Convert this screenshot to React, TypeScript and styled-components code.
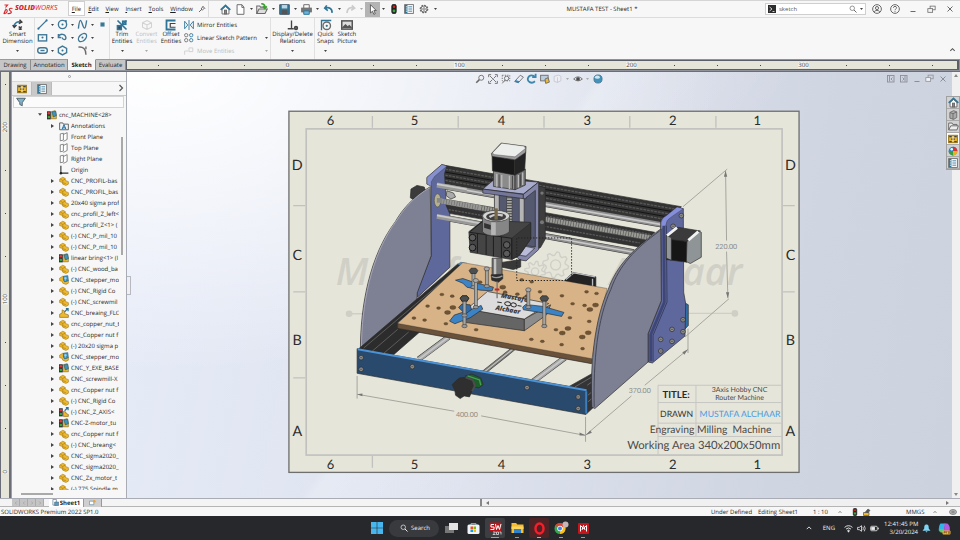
import React from "react";
import styled, { createGlobalStyle } from "styled-components";

const Global = createGlobalStyle`
  * { box-sizing: border-box; }
  html, body, #root { height: 100%; }
  body { margin: 0; overflow: hidden; background: #f7f7f7; text-rendering: geometricPrecision; }
  body, button, input { font-family: "Open Sans", "Noto Sans", sans-serif; font-size: 6px; color: #1f1f1f; }
  button { background: none; border: 0; padding: 0; margin: 0; line-height: inherit; text-rendering: inherit; }
  ul { list-style: none; margin: 0; padding: 0; }
`;

/* ---------- shell ---------- */
const Page = styled.div`
  display: flex;
  flex-direction: column;
  height: 100vh;
  line-height: 8px;
`;
const TitleBar = styled.header`
  display: flex;
  align-items: center;
  height: 18px;
  flex: none;
  background: #f7f7f7;
  border-top: 1px solid #d5d5d5;
  border-bottom: 1px solid #dcdcdc;
`;
const Logo = styled.div`
  display: flex;
  align-items: center;
  gap: 2px;
  width: 68px;
  padding-left: 3px;
  color: #d9262c;
  font-style: italic;
  font-size: 7px;
  b { font-weight: 800; }
`;
const Menu = styled.nav`
  display: flex;
  height: 100%;
  border-right: 1px solid #dcdcdc;
`;
const MenuItem = styled.button<{ $w: number; $boxed?: boolean }>`
  width: ${(p) => p.$w}px;
  height: 15px;
  border: ${(p) => (p.$boxed ? "1px solid #cfcfcf" : "0")};
  background: ${(p) => (p.$boxed ? "#fff" : "transparent")};
  &::first-letter { text-decoration: underline; }
`;
const Tool = styled.button<{ $w?: number; $on?: boolean }>`
  display: flex;
  align-items: center;
  justify-content: center;
  width: ${(p) => p.$w ?? 12}px;
  height: 15px;
  flex: none;
  background: ${(p) => (p.$on ? "#b4b4b4" : "transparent")};
`;
const QuickBar = styled.div`
  display: flex;
  align-items: center;
  padding-left: 8px;
`;
const DocTitle = styled.div`
  flex: 1;
  text-align: center;
  color: #222;
`;
const SearchBox = styled.label`
  display: flex;
  align-items: center;
  width: 101px;
  height: 12px;
  padding: 0 2px;
  gap: 3px;
  background: #fff;
  border: 1px solid #cfcfcf;
  input { flex: 1; min-width: 0; border: 0; padding: 0; outline: 0; background: none; color: #555; }
`;
const WindowTools = styled.div`
  display: flex;
  padding-left: 2px;
`;

/* ---------- ribbon ---------- */
const Ribbon = styled.div`
  display: flex;
  height: 41px;
  flex: none;
  background: #f7f7f7;
`;
const Group = styled.div<{ $w: number }>`
  display: flex;
  width: ${(p) => p.$w}px;
  flex: none;
  border-right: 1px solid #e0e0e0;
`;
const BigTool = styled.button<{ $w: number; $off?: boolean }>`
  display: flex;
  flex-direction: column;
  align-items: center;
  justify-content: flex-start;
  width: ${(p) => p.$w}px;
  flex: none;
  padding-top: 1px;
  line-height: 7px;
  color: ${(p) => (p.$off ? "#bdbdbd" : "#1f1f1f")};
  white-space: nowrap;
  span { height: 19px; }
`;
const SketchGrid = styled.div`
  display: grid;
  grid-template-columns: 12px 8px 12px 8px 12px 8px 12px;
  grid-auto-rows: 13px;
  align-items: center;
  justify-items: center;
  padding-left: 1px;
`;
const WideList = styled.div`
  display: flex;
  flex-direction: column;
  flex: 1;
`;
const WideTool = styled.button<{ $off?: boolean }>`
  display: flex;
  align-items: center;
  height: 13px;
  padding: 0 2px 0 1px;
  gap: 3px;
  color: ${(p) => (p.$off ? "#bdbdbd" : "#1f1f1f")};
  svg:not(:first-child) { margin-left: auto; }
`;
const RibbonEnd = styled.div`
  margin: auto 4px 4px auto;
`;

/* ---------- tabs and rulers ---------- */
const TabRow = styled.div`
  display: flex;
  height: 12px;
  flex: none;
  padding-bottom: 1px;
  background: #8f929b;
`;
const Tab = styled.button<{ $w: number; $on?: boolean }>`
  width: ${(p) => p.$w}px;
  flex: none;
  border-right: 1px solid #8d8d8d;
  border-top: 1px solid ${(p) => (p.$on ? "#f7f7f7" : "#9a9a9a")};
  background: ${(p) => (p.$on ? "#f7f7f7" : "#c6c6c6")};
  font-weight: ${(p) => (p.$on ? 700 : 400)};
`;
const RulerH = styled.div`
  display: flex;
  flex: 1;
  min-width: 0;
  margin-top: 1px;
  margin-right: 1px;
  padding-left: 10px;
  overflow: hidden;
  background: #e6e5da;
  border: 1px solid #5c5f68;
  border-right-width: 2px;
  color: #444;
`;
const RulerV = styled.div`
  display: flex;
  flex-direction: column;
  width: 11px;
  flex: none;
  overflow: hidden;
  background: #e6e5da;
  border: solid #6b6e78;
  border-width: 0 2px 0 1px;
  color: #444;
`;
const Mark = styled.span<{ $v?: boolean }>`
  display: flex;
  align-items: center;
  justify-content: center;
  flex: none;
  width: ${(p) => (p.$v ? "auto" : "43px")};
  height: ${(p) => (p.$v ? "43px" : "100%")};
  line-height: 6px;
  &:first-child { margin-top: ${(p) => (p.$v ? "-9px" : "0")}; }
  b { font-weight: 400; writing-mode: ${(p) => (p.$v ? "vertical-rl" : "horizontal-tb")}; transform: ${(p) => (p.$v ? "rotate(180deg)" : "none")}; background: #f4f4ee; }
  i { width: 1px; height: 1px; background: #444; }
`;

/* ---------- work area ---------- */
const Work = styled.main`
  display: flex;
  flex: 1;
  min-height: 0;
  border-top: 1px solid #6b6e78;
`;
const Side = styled.aside`
  display: flex;
  flex-direction: column;
  width: 116px;
  flex: none;
  background: #f7f7f7;
  border-left: 1px solid #9b9ea8;
  border-right: 1px solid #a9acb5;
`;
const Grip = styled.div`
  display: flex;
  align-items: center;
  justify-content: center;
  height: 10px;
  flex: none;
  border-bottom: 1px solid #d8d8d8;
  i { width: 3px; height: 3px; border: 1px solid #999; border-radius: 50%; }
`;
const SideTabs = styled.div`
  display: flex;
  align-items: center;
  height: 14px;
  flex: none;
  border-bottom: 1px solid #c9c9c9;
`;
const SideTab = styled.button<{ $on?: boolean }>`
  display: flex;
  align-items: center;
  justify-content: center;
  width: 20px;
  height: 13px;
  background: ${(p) => (p.$on ? "#c8c8c8" : "#ececec")};
  border-right: 1px solid #bbb;
`;
const Expand = styled.button`
  margin-left: auto;
  padding-right: 1px;
`;
const Filter = styled.label`
  display: flex;
  align-items: center;
  height: 12px;
  flex: none;
  margin: 0 2px 0 1px;
  padding: 0 2px;
  background: #fbfbfb;
  border: 1px solid #d4d4d4;
  input { width: 90px; border: 0; padding: 0; background: none; outline: 0; }
`;
const TreeWrap = styled.div`
  display: flex;
  flex: 1;
  min-height: 0;
  margin-top: 1px;
  overflow: hidden;
`;
const Tree = styled.ul`
  width: 107px;
  flex: none;
  overflow: hidden;
`;
const Row = styled.li<{ $root?: boolean }>`
  display: flex;
  align-items: center;
  height: 11px;
  padding-left: ${(p) => (p.$root ? 26 : 38)}px;
  white-space: nowrap;
  > svg { flex: none; }
  > svg + svg { margin: 0 2px 0 5px; }
`;
const Thumb = styled.div`
  width: 2px;
  height: 118px;
  margin: 28px 0 0 2px;
  background: #a9a9a9;
`;
const HThumb = styled.div`
  width: 32px;
  height: 2px;
  margin: 3px 0 3px 9px;
  flex: none;
  background: #a9a9a9;
`;
const Viewport = styled.section`
  position: relative;
  flex: 1;
  min-width: 0;
  background:
    linear-gradient(125deg, rgba(255,255,255,0) 42%, rgba(255,255,255,.2) 43%, rgba(255,255,255,0) 60%),
    radial-gradient(ellipse at 4% 0%, #ffffff 0%, rgba(255,255,255,0) 50%),
    linear-gradient(100deg, #e6ebf8 0%, #dde2ee 45%, #d0d5e2 80%, #cdd2df 100%);
`;
const Canvas = styled.svg`
  display: block;
  width: 100%;
  height: 100%;
`;
const HeadsUp = styled.div<{ $side?: boolean }>`
  position: absolute;
  top: -1px;
  ${(p) => (p.$side ? "right: 3px;" : "left: 346px;")}
  display: flex;
`;
const Splitter = styled.button`
  position: absolute;
  left: 0;
  top: 204px;
  width: 4px;
  height: 19px;
  background: #f0f0f3;
  border: 1px solid #b6b9c2;
  border-left: 0;
`;
const TaskPane = styled.div`
  position: absolute;
  right: -8px;
  top: 24px;
  z-index: 1;
  border: 1px solid #a0a0a0;
`;
const PaneButton = styled.button<{ $on?: boolean }>`
  display: flex;
  align-items: center;
  justify-content: center;
  width: 12px;
  height: 12px;
  background: ${(p) => (p.$on ? "#fff" : "#d2d2d2")};
  border-bottom: 1px solid #aaa;
`;
const VScroll = styled.div`
  display: flex;
  flex-direction: column;
  justify-content: space-between;
  align-items: center;
  width: 8px;
  flex: none;
  padding: 2px 0;
  background: #f0f0f0;
`;

/* ---------- bottom rows ---------- */
const SheetRow = styled.div`
  display: flex;
  align-items: center;
  height: 9px;
  flex: none;
  padding-left: 12px;
  background: #f4f4f4;
  border-top: 1px solid #a9acb5;
  border-bottom: 1px solid #b5b5b5;
`;
const Nav = styled.button`
  display: flex;
  align-items: center;
  justify-content: center;
  width: 8px;
  height: 7px;
  background: #c4c4c4;
  border-right: 1px solid #aaa;
`;
const SheetTab = styled.button<{ $w: number; $on?: boolean }>`
  display: flex;
  align-items: center;
  justify-content: center;
  gap: 1px;
  width: ${(p) => p.$w}px;
  height: 8px;
  margin-left: ${(p) => (p.$on ? 5 : 0)}px;
  background: ${(p) => (p.$on ? "#fff" : "#cfcfcf")};
  border-right: 1px solid #999;
  font-weight: 700;
`;
const HScroll = styled.div`
  display: flex;
  align-items: center;
  justify-content: space-between;
  width: 50vw;
  height: 100%;
  margin-left: auto;
  padding: 0 11px 0 4px;
  border-left: 2px solid #888;
  background: #f0f0f0;
`;
const Status = styled.footer`
  display: flex;
  align-items: center;
  height: 9px;
  flex: none;
  padding-left: 1px;
  background: #f7f7f7;
  white-space: nowrap;
`;
const StatusCell = styled.span<{ $w: number }>`
  display: flex;
  align-items: center;
  gap: 4px;
  width: ${(p) => p.$w}px;
  &:first-child { flex: 1; }
`;
const Taskbar = styled.div`
  display: grid;
  grid-template-columns: 1fr auto 1fr;
  align-items: center;
  height: 24px;
  flex: none;
  background: #26282b;
  color: #f2f2f2;
`;
const Apps = styled.div`
  grid-column: 2;
  display: flex;
  align-items: center;
  gap: 2px;
`;
const AppButton = styled.button<{ $bg?: string; $bar?: string }>`
  position: relative;
  display: flex;
  align-items: center;
  justify-content: center;
  width: 20px;
  height: 20px;
  border-radius: 2px;
  background: ${(p) => p.$bg ?? "transparent"};
  &::after {
    content: "";
    position: absolute;
    bottom: 0;
    width: ${(p) => (p.$bar === "#5ab7e8" ? 8 : 4)}px;
    height: 1px;
    background: ${(p) => p.$bar ?? "transparent"};
  }
`;
const Pill = styled.button`
  display: flex;
  align-items: center;
  gap: 3px;
  width: 50px;
  height: 17px;
  padding-left: 11px;
  border-radius: 9px;
  background: #393a3d;
  color: #eee;
`;
const Tray = styled.div`
  display: flex;
  align-items: center;
  justify-content: flex-end;
  gap: 4px;
  padding-right: 9px;
`;
const Lang = styled.span`
  margin: 0 5px 0 7px;
`;
const Clock = styled.time`
  width: 34px;
  text-align: right;
  white-space: nowrap;
  margin-left: 1px;
`;
const Bell = styled.button`
  display: flex;
  margin-right: 3px;
`;

/* ---------- icons ---------- */
const blue = "#2e7598";
const gray = "#6a6a6a";
type IcoProps = { s?: number; children: React.ReactNode; c?: string; w?: number };
const Ico = ({ s = 10, children, c = gray, w = 1.4 }: IcoProps) => (
  <svg width={s} height={s} viewBox="0 0 16 16" fill="none" stroke={c} strokeWidth={w} aria-hidden="true">
    {children}
  </svg>
);
const Caret = ({ off }: { off?: boolean }) => (
  <svg width="3" height="2" viewBox="0 0 6 4" aria-hidden="true"><path d="M0 0H6L3 4Z" fill={off ? "#aaa" : "#444"} /></svg>
);
const Home = ({ s = 11 }: { s?: number }) => (
  <Ico s={s}><path d="M3 8V14.500H13V8L8 3.500Z" fill="#fff" /><path d="M1 8.500L8 2L15 8.500" stroke={blue} strokeWidth="2.400" /><rect x="6.500" y="9" width="3" height="5.500" fill="#888" /></Ico>
);
const NewDoc = () => <Ico s={11}><path d="M3 1H10L13 4.500V15H3Z" fill="#fff" /><path d="M10 1V5H13" /></Ico>;
const OpenDoc = () => <Ico s={12}><path d="M1 14V4H5L6 5.500H11V8" fill="#eee" /><path d="M1 14L4 8H15L12 14Z" fill="#ddd" /><path d="M7 1C11 1 12 3 12 6M9.500 4.500L12 7L14.500 4.500" stroke="#38a32b" strokeWidth="2.200" /></Ico>;
const Save = () => <Ico s={11} c="#465b6b"><path d="M1 1H15V15H1Z" fill={blue} /><rect x="4" y="1.500" width="8" height="5" fill="#b9d4e2" stroke="none" /><rect x="4" y="9" width="8" height="6" fill="#555" stroke="none" /></Ico>;
const Print = () => <Ico s={11}><path d="M4 6V1H12V6" fill="#fff" /><rect x="1" y="6" width="14" height="5.500" fill="#777" /><path d="M4 10H12V15H4Z" fill="#6db5da" stroke={blue} /></Ico>;
const Undo = ({ off }: { off?: boolean }) => (
  <Ico s={11} c={off ? "#ccc" : blue} w={2.400}>{off ? <path d="M3 13C3 6 8 4 13 6M10 2L14 6L9 9" /> : <path d="M13 13C14 7 9 4 3 6M5.500 2L2.500 6L7 9.500" />}</Ico>
);
const Cursor = () => <Ico s={11} c="#333" w={1}><path d="M5 1V13L8 10.500L10 15L12 14L10 9.500H13.500Z" fill="#fff" /></Ico>;
const Traffic = ({ s = 10 }: { s?: number }) => (
  <Ico s={s} c="#222"><rect x="4.500" y="0.500" width="7" height="15" rx="3" fill="#222" /><circle cx="8" cy="4.500" r="2" fill="#d22" stroke="none" /><circle cx="8" cy="11" r="2.300" fill="#3aa83a" stroke="none" /></Ico>
);
const ListIco = ({ s = 10 }: { s?: number }) => (
  <Ico s={s}><rect x="1" y="1" width="14" height="14" fill="#fff" /><rect x="1.500" y="1.500" width="4" height="13" fill={blue} stroke="none" /><path d="M7 4.500H13M7 8H13M7 11.500H13" stroke={blue} /><path d="M3 4.500H5M3 8H5M3 11.500H5" stroke="#fff" /></Ico>
);
const Gear = () => <Ico s={10}><circle cx="8" cy="8" r="6" strokeDasharray="3 1.600" strokeWidth="2" /><circle cx="8" cy="8" r="4.800" /><circle cx="8" cy="8" r="2" /></Ico>;
const Pin = () => <Ico s={8}><path d="M9 2L14 7M10 3L6 8L8.500 10.500L13 6M7 9L2 14" strokeWidth="2" /></Ico>;
const PartManager = () => <Ico s={10} c="#8b6a12"><rect x="1" y="2" width="14" height="12" fill="#e2b32c" /><path d="M2 4H6M10 4H14M5 8H11M2 12H6M10 12H14" stroke="#444" strokeWidth="2" /><path d="M8 4V12" stroke="#fff" /></Ico>;
const Lens = ({ s = 8, c = gray }: { s?: number; c?: string }) => <Ico s={s} c={c}><circle cx="6.500" cy="6.500" r="4.500" /><path d="M10 10L15 15" strokeWidth="2" /></Ico>;
const MinIco = ({ c = gray }: { c?: string }) => <Ico s={8} c={c} w={2}><path d="M3 13H13" /></Ico>;
const RestIco = ({ c = gray }: { c?: string }) => <Ico s={9} c={c}><rect x="5.500" y="2" width="9" height="6.500" /><rect x="1.500" y="6.500" width="8.500" height="6.500" fill="#f4f4f4" /></Ico>;
const CloseIco = ({ c = gray }: { c?: string }) => <Ico s={8} c={c} w={2}><path d="M3 3L13 13M13 3L3 13" /></Ico>;
const Chevron = ({ d, s = 7, c = "#555" }: { d: string; s?: number; c?: string }) => <Ico s={s} c={c} w={2.400}><path d={d} /></Ico>;

const yellow = "#edb92e";
const Cube = () => <path d="M1 5L6 2L10 4V7L15 9V13L11 15L6 13L5 10L1 9Z" fill={yellow} stroke="#a87a12" strokeWidth="1" />;
const treeIcons: Record<string, React.ReactNode> = {
  part: <><Cube /><path d="M2 5L6 7L10 5M6 7V11L11 12" stroke="#a87a12" strokeWidth="1" /></>,
  asm: <><Cube /><path d="M7 2L14 1L15 9L9 11L7 8Z" fill="#3f93bd" stroke="#1f5d7e" strokeWidth="1" /><path d="M8 5H13M10 3V9" stroke="#d5ecf8" strokeWidth="1" /></>,
  light: <><path d="M6 3L13 1L15 8V14H6Z" fill={yellow} stroke="#7d6a22" strokeWidth="1" /><path d="M8 3L14 2L15 9L10 11Z" fill="#3f93bd" stroke="#1f5d7e" strokeWidth="1" /><rect x="0" y="2" width="6" height="13" fill="#333" stroke="none" /><circle cx="3" cy="5" r="2" fill="#e33" stroke="none" /><circle cx="3" cy="11" r="2" fill="#3a3" stroke="none" /></>,
  flex: <><path d="M1 15V10L5 8V3L9 5V9L15 11V15Z" fill={yellow} stroke="#8a6512" strokeWidth="1" /><path d="M9 6L14 1M11 1H14.500V5" stroke={blue} strokeWidth="2" /></>,
  lflex: <><path d="M7 15V7L11 8V10L15 12V15Z" fill={yellow} stroke="#8a6512" strokeWidth="1" /><path d="M9 6L14 1M11 1H14.500V5" stroke={blue} strokeWidth="2" /><rect x="0" y="2" width="6" height="13" fill="#333" stroke="none" /><circle cx="3" cy="5" r="2" fill="#e33" stroke="none" /><circle cx="3" cy="11" r="2" fill="#3a3" stroke="none" /></>,
  note: <><path d="M1 3H6L7 5H15V14H1Z" fill="#eef3f6" stroke="#555" /><path d="M5 13L8 6L11 13M6 11H10" stroke="#1c6ea4" strokeWidth="1.600" /></>,
  plane: <><path d="M2 3L7 2V13L2 14ZM7 4L13 1V12L7 15" fill="#fff" stroke="#666" strokeWidth="1.200" /></>,
  origin: <><path d="M3 1V13H15" stroke="#333" strokeWidth="1.800" /><circle cx="3" cy="13" r="2" fill="#222" stroke="none" /></>,
};

const rows: [string, string][] = [
  ["note", "Annotations"], ["plane", "Front Plane"], ["plane", "Top Plane"], ["plane", "Right Plane"], ["origin", "Origin"],
  ["part", "CNC_PROFIL-bas"], ["part", "CNC_PROFIL_bas"], ["part", "20x40 sigma profi"], ["part", "cnc_profil_Z_left<"],
  ["part", "cnc_profil_Z<1> ("], ["part", "(-) CNC_P_mil_10"], ["part", "(-) CNC_P_mil_10"], ["light", "linear bring<1> (I"],
  ["part", "(-) CNC_wood_ba"], ["asm", "CNC_stepper_mo"], ["part", "(-) CNC_Rigid Co"], ["part", "(-) CNC_screwmil"],
  ["flex", "CNC_breaing_FLO"], ["part", "cnc_copper_nut_t"], ["part", "cnc_Copper nut f"], ["part", "(-) 20x20 sigma p"],
  ["asm", "CNC_stepper_mo"], ["light", "CNC_Y_EXE_BASE"], ["part", "CNC_screwmill-X"], ["part", "cnc_Copper nut f"],
  ["part", "(-) CNC_Rigid Co"], ["lflex", "(-) CNC_Z_AXIS<"], ["light", "CNC-Z-motor_tu"], ["part", "cnc_Copper nut f"],
  ["part", "(-) CNC_breang<"], ["part", "CNC_sigma2020_"], ["part", "CNC_sigma2020_"], ["part", "CNC_Zx_motor_t"], ["part", "(-) 775 Spindle m"],
];
const closed = new Set(["plane", "origin"]);

/* ---------- machine drawing, three units to a pixel ---------- */
const Num = styled.text<{ $s?: number }>`
  font-family: Lato, sans-serif;
  font-size: ${(p) => p.$s ?? 39}px;
  fill: #2c2c2c;
  text-anchor: middle;
`;
const Block = styled.text<{ $s: number; $c?: string; $b?: boolean }>`
  font-family: Lato, sans-serif;
  font-size: ${(p) => p.$s}px;
  font-weight: ${(p) => (p.$b ? 700 : 400)};
  fill: ${(p) => p.$c ?? "#4a4a4a"};
  white-space: pre;
`;
const Dim = styled.text`
  font-family: Lato, sans-serif;
  font-size: 21px;
  fill: #8b8b86;
  text-anchor: middle;
`;
const Watermark = styled.text`
  font-family: "Open Sans", sans-serif;
  font-style: italic;
  font-weight: 600;
  font-size: 114px;
  fill: #d0d0c7;
`;
const Engraved = styled.text`
  font-family: "Open Sans", sans-serif;
  font-style: italic;
  font-weight: 800;
  font-size: 20px;
  fill: #3a3a3a;
`;

const P = ({ d, f = "none", s = "#2a2a2a", w = 2 }: { d: string; f?: string; s?: string; w?: number }) => (
  <path d={d} fill={f} stroke={s} strokeWidth={w} strokeLinejoin="round" />
);
const Rod = ({ a, w = 16, c = "#8d8d8d" }: { a: string; w?: number; c?: string }) => (
  <>
    <path d={a} stroke="#3a3a3a" strokeWidth={w + 3} />
    <path d={a} stroke={c} strokeWidth={w} />
    <path d={a} stroke="#c9c9c9" strokeWidth={w / 3} />
  </>
);
const Screw = ({ x, y, r = 7 }: { x: number; y: number; r?: number }) => (
  <><circle cx={x} cy={y} r={r} fill="#8e8e8c" stroke="#2b2b2b" strokeWidth="2" /><path d={`M${x - 3} ${y}h6`} stroke="#444" strokeWidth="2" /></>
);
const Stud = ({ x, y, h, head }: { x: number; y: number; h: number; head?: boolean }) => (
  <>
    <path d={`M${x} ${y}V${y + h}`} stroke="#4b4b4b" strokeWidth="11" />
    <path d={`M${x} ${y}V${y + h}`} stroke="#a5a5a2" strokeWidth="7" />
    <ellipse cx={x} cy={y + h} rx="8" ry="5" fill="#999" stroke="#444" strokeWidth="2" />
    {head ? <path d={`M${x - 13} ${y - 2}l6 -7h14l6 7l-5 9h-16z`} fill="#4c4f50" stroke="#222" strokeWidth="2" /> : <ellipse cx={x} cy={y} rx="8" ry="6" fill="#aaa" stroke="#444" strokeWidth="2" />}
  </>
);
const Gear3 = ({ x, y, r }: { x: number; y: number; r: number }) => (
  <g fill="none" stroke="#cfcfc6" strokeWidth="4">
    <circle cx={x} cy={y} r={r * 0.5} />
    <path
      strokeLinejoin="round"
      d={`M${Array.from({ length: 32 }, (_, i) => {
        const a = (i * Math.PI) / 16 + 0.1;
        const q = i % 4 < 2 ? r + 9 : r - 1;
        return `${Math.round(x + q * Math.cos(a))} ${Math.round(y + q * Math.sin(a))}`;
      }).join("L")}Z`}
    />
  </g>
);
const holes: [number, number, number?][] = [
  [485, 567], [516, 572], [725, 523], [755, 529], [675, 560], [712, 566], [740, 572], [442, 602], [475, 608], [518, 606, 2], [502, 621, 2],
  [401, 638], [433, 644], [588, 673], [497, 655], [780, 559], [846, 571], [920, 559], [950, 564], [878, 595], [914, 600], [947, 599, 2], [930, 612, 2],
  [870, 637], [928, 648], [828, 673], [864, 669, 2], [847, 683, 2], [925, 682, 2], [907, 695, 2], [787, 708], [754, 702], [845, 718], [908, 730],
  [668, 545, 2], [600, 530],
];
const bolts = [[242, 757], [242, 792], [396, 784], [741, 847], [895, 875], [895, 910], [1143, 702], [1177, 672], [1210, 643], [1143, 737], [1177, 708], [1210, 679], [1180, 362], [1205, 330]];
const numbers: [string, number][] = [["6", 150], ["5", 403], ["4", 664], ["3", 922], ["2", 1179], ["1", 1433]];
const letters: [string, number][] = [["D", 178], ["C", 449], ["B", 706], ["A", 979]];

const Drawing = () => (
  <Canvas viewBox="-459 -102 2475 1281" fill="none" role="img" aria-label="Drawing sheet of the CNC machine">
    <rect x="25" y="16" width="1534" height="1086" fill="#e6e5da" stroke="#6f6f6f" strokeWidth="4" />
    <rect x="77" y="69" width="1431" height="981" stroke="#c1c1bf" strokeWidth="5" />
    <path d="M276 30V66M534 30V66M792 30V66M1050 30V66M1309 30V66M276 1053V1088M38 300H74M38 559H74M38 818H74M1511 300H1546M1511 559H1546" stroke="#c1c1bf" strokeWidth="4" />
    {numbers.map(([n, x]) => <React.Fragment key={n}><Num x={x} y={58}>{n}</Num><Num x={x} y={1092}>{n}</Num></React.Fragment>)}
    {letters.map(([n, y]) => <React.Fragment key={n}><Num x={50} y={y + 14} $s={43}>{n}</Num><Num x={1533} y={y + 14} $s={43}>{n}</Num></React.Fragment>)}

    <Watermark x={166} y={540}>Mustafa</Watermark>
    <Watermark x={1388} y={540} textAnchor="end">Alchaar</Watermark>
    <Gear3 x={827} y={478} r={30} />
    <Gear3 x={765} y={498} r={22} />
    <path d="M206 625H300M1200 624H1366" stroke="#cfcfc6" strokeWidth="4" />
    <circle cx="206" cy="625" r="10" fill="#cfcfc6" /><circle cx="1366" cy="624" r="10" fill="#cfcfc6" />

    {/* cross rails */}
    <P d="M490 178L1205 303L1150 352L490 236Z" f="#343434" />
    <path d="M495 190L1190 311M495 208L1170 325M495 224L1150 340" stroke="#595957" strokeWidth="4" strokeDasharray="8 3" />
    <path d="M495 199L1180 318M495 216L1160 333" stroke="#141414" strokeWidth="3" />
    <P d="M490 290L600 308L780 318L1125 380L1078 424L490 320Z" f="#323232" />
    <path d="M495 310L1080 412M780 328L1110 386" stroke="#585858" strokeWidth="4" strokeDasharray="7 3" />
    <Rod a="M470 238L1146 357" w={15} />
    <path d="M472 284L1115 397" stroke="#555" strokeWidth="18" />
    <path d="M472 284L1115 397" stroke="#9b9b96" strokeWidth="14" strokeDasharray="6 2" />
    <Rod a="M470 332L1062 440" w={15} />
    <P d="M500 255L520 262L526 274L512 280L498 270Z" f="#aaa" />

    {/* left side */}
    <P d="M392 250L410 239L432 244L438 262L410 288L390 276Z" f="#3b3b3b" />
    <P d="M440 235V215L485 176L500 181L493 203L498 300L509 325V485L412 575L410 560L453 450V240Z" f="#5f689b" />
    <P d="M440 235V215L485 176L500 181L463 212L453 228V242Z" f="#8790cf" w={1} />
    <path d="M470 238L560 254M470 332L600 356M472 284L600 306" stroke="#989896" strokeWidth="15" />
    <path d="M470 235L560 251M470 329L600 353" stroke="#c9c9c9" strokeWidth="5" />
    <path d="M490 287L600 306" stroke="#6d6d6a" strokeWidth="14" strokeDasharray="2 6" />
    <ellipse cx="472" cy="284" rx="10" ry="20" fill="#b5b18c" stroke="#555" strokeWidth="2" />
    <path d="M470 284h16" stroke="#888" strokeWidth="14" />
    <P d="M450 243L453 450L411 562L409 602L245 732L240 732C240 600 268 450 345 348C365 312 400 272 450 243Z" f="#7e8093" />
    <path d="M449 246C402 272 370 310 350 343C270 450 244 600 243 728" stroke="#a4a6b4" strokeWidth="3" />
    <P d="M532 476L556 480L352 652V668L418 680L340 748L233 732Z" f="#2c2c2d" />
    <path d="M540 483L250 728M352 672L275 738M385 680L310 744" stroke="#5b5b5b" strokeWidth="3" />
    <P d="M532 476L542 470L560 473L548 482Z" f="#3f8fd2" w={1} />

    {/* under the bed */}
    <Rod a="M505 695L415 762" w={14} c="#a9a9a9" />
    <Rod a="M700 730L610 802" w={10} c="#7d7d78" />
    <Rod a="M855 757L760 828" w={14} c="#a9a9a9" />
    <P d="M940 803L865 845L922 858L920 926L942 905Z" f="#343436" />
    <path d="M936 815L885 845M936 830L922 840M936 860L924 870M936 880L924 890" stroke="#666" strokeWidth="3" />

    {/* bed */}
    <P d="M855 523L880 501L948 514V545L860 535Z" f="#232323" />
    <path d="M858 522L882 502L946 514M938 520V545" stroke="#b8bbc0" strokeWidth="4" />
    <P d="M352 653L935 758V775L352 669Z" f="#69513a" />
    <P d="M548 471L982 549L960 640L936 760L352 654Z" f="#d8b387" w={1} />
    {holes.map(([x, y, k = 1], i) => (
      <React.Fragment key={i}><ellipse cx={x} cy={y} rx={5 + k * k} ry={2 + k * 2} fill="#6f5433" stroke="#4b3a26" strokeWidth="1" /></React.Fragment>
    ))}

    {/* front bar */}
    <P d="M230 730L922 853L918 928L230 804Z" f="#294a6c" />
    <path d="M232 732L920 855" stroke="#4b92d6" strokeWidth="6" />
    <path d="M919 858V925" stroke="#3d7fbd" strokeWidth="6" />
    <P d="M555 812L575 806L602 818L609 838L596 848L570 842Z" f="#1d5e2b" />
    <path d="M562 812L598 824L602 840" stroke="#43a054" strokeWidth="4" />
    <P d="M516 838L528 826L538 818L556 816L575 822L583 842L575 858L568 875L552 872L540 880L526 870L524 856Z" f="#2f2f2f" />
    <path d="M556 816L578 824L584 842L576 858" stroke="#4c4c4c" strokeWidth="6" />

    {/* stock and clamps */}
    <P d="M526 524L548 519L585 532L640 545L636 556L600 554L560 545L548 533Z" f="#3c83c6" />
    <P d="M562 610L733 641V676L548 650Z" f="#656565" />
    <P d="M733 641L812 598L800 628L733 676Z" f="#8c8c8c" />
    <P d="M622 558L806 594L733 641L560 611Z" f="#dcdcdc" />
    <g transform="rotate(10 700 590)">
      <Engraved x={660} y={583}>Mustafa</Engraved>
      <Engraved x={650} y={622}>Alchaar</Engraved>
      <path d="M652 598h14m18 -6a9 6 0 1 0 .1 0m18 0a8 6 0 1 0 .1 0m12 6h12" stroke="#333" strokeWidth="3" />
    </g>
    <P d="M508 647L522 629L565 615L603 600L608 611L570 637L524 655Z" f="#3c83c6" />
    <P d="M728 605L737 597L790 603L852 621L845 633L800 624L730 613Z" f="#3c83c6" />
    <Stud x={580} y={497} h={48} head /><Stud x={587} y={525} h={80} /><Stud x={620} y={490} h={52} />
    <Stud x={553} y={580} h={82} head /><Stud x={745} y={553} h={52} /><Stud x={793} y={580} h={82} head />
    <P d="M535 606L545 596L570 598L574 612L556 626Z" f="#2f6ca8" />
    <Stud x={553} y={580} h={50} head />

    {/* Z axis */}
    <P d="M772 240L796 246V400L782 425L760 440Z" f="#3d3d3d" />
    <circle cx="786" cy="350" r="6" fill="#777" /><circle cx="786" cy="262" r="5" fill="#777" />
    <P d="M655 262L772 235V425L735 440L655 360Z" f="#555970" />
    <path d="M650 262V330M725 268V372" stroke="#444" strokeWidth="17" />
    <path d="M650 262V330M725 268V372" stroke="#b5b5b5" strokeWidth="12" />
    <path d="M688 270V355" stroke="#444" strokeWidth="18" /><path d="M688 270V355" stroke="#a9a9a4" strokeWidth="14" strokeDasharray="5 3" />
    <P d="M608 250L645 219L776 229L730 265Z" f="#a9accb" />
    <P d="M608 250L730 266V279L608 262Z" f="#74779a" />
    <P d="M730 266L776 229V432L738 466L720 463L700 446L735 420L766 424V254L738 276V279H730Z" f="#8486aa" />
    <P d="M700 446L735 422L764 428L738 452Z" f="#b9bbd8" />
    <P d="M640 194L705 206V252L640 242Z" f="#8b8b8b" />
    <P d="M705 206L736 190V238L705 252Z" f="#6e6e6e" />
    <path d="M650 205V243M665 208V246M688 210V250M715 208V245M728 200V238" stroke="#bbb" strokeWidth="4" />
    <path d="M657 206V244M697 210V250M721 206V242" stroke="#444" strokeWidth="3" />
    <P d="M636 150L704 163V208L637 195Z" f="#191919" />
    <P d="M704 163L737 138L734 192L704 208Z" f="#242424" />
    <P d="M634 143L663 112L738 122L737 140L705 162L636 152Z" f="#9c9c9c" />
    <P d="M638 140L665 112L733 121L736 128L705 153L640 146Z" f="#eceeec" w={1} />

    {/* spindle and its clamp */}
    <P d="M655 472L722 462V484L700 492L662 484Z" f="#383838" />
    <P d="M566 378L610 344L752 350V400L718 450L695 462L570 440Z" f="#454546" />
    <P d="M695 398L752 352V400L718 448L695 462Z" f="#363636" />
    <path d="M568 380L695 398V460M610 345L570 378M592 384V442M618 388V448M640 390V452M664 394V456" stroke="#1f1f1f" strokeWidth="3" />
    {[[577, 396], [577, 426], [680, 418], [680, 444]].map(([x, y]) => <circle key={`${x}-${y}`} cx={x} cy={y} r="10" fill="#5b5b5b" stroke="#171717" strokeWidth="3" />)}
    <P d="M607 332V378C620 396 672 396 688 378V332Z" f="#868686" />
    <path d="M640 350V388" stroke="#b5b5b5" strokeWidth="14" /><path d="M612 352l20 6v14l-20 -6z" fill="#333" />
    <ellipse cx="648" cy="331" rx="41" ry="17" fill="#d5d5d3" stroke="#333" strokeWidth="2" />
    <ellipse cx="648" cy="333" rx="30" ry="12" fill="#3e3e3e" />
    <path d="M628 334q18 -12 40 -4" stroke="#ccc" strokeWidth="7" />
    <path d="M648 308V342" stroke="#77684a" strokeWidth="10" />
    <P d="M636 458H666V510H636Z" f="#737373" />
    <path d="M645 460V510" stroke="#c2c2c2" strokeWidth="7" />
    <P d="M633 508L668 506V520L655 530L635 524Z" f="#2d2d2d" />
    <path d="M635 513Q650 521 667 511" stroke="#999" strokeWidth="4" />
    <path d="M651 528V578" stroke="#777" strokeWidth="4" /><path d="M644 552H658" stroke="#c22" strokeWidth="6" />

    {/* right side */}
    <P d="M1215 592L1226 598V660L1215 672Z" f="#2f6fa8" />
    <P d="M1143 350Q1146 336 1160 330L1192 304L1211 309L1212 560L1218 594L1216 692L1118 773L1105 770V685L1145 585Z" f="#5f689d" />
    <P d="M1144 350Q1146 336 1160 330L1192 304L1211 309L1172 336Q1160 342 1158 360L1144 372Z" f="#858edb" w={1} />
    <path d="M1152 360L1154 590L1113 688V768" stroke="#3e4675" strokeWidth="8" />
    <path d="M1160 360L1162 590L1120 690V768" stroke="#222846" strokeWidth="2" />
    <P d="M1143 370L1145 585L1105 685V770L945 910L936 906C930 770 945 640 985 552C1010 480 1060 430 1143 370Z" f="#7d7f92" />
    <path d="M1140 376C1065 430 1018 480 993 552C952 640 940 770 943 905" stroke="#454856" strokeWidth="3" />
    {bolts.map(([x, y]) => <Screw key={`${x}-${y}`} x={x} y={y} />)}
    <P d="M1160 388L1190 364L1262 376L1225 408L1160 402Z" f="#3b3b3b" />
    <P d="M1160 400L1222 408V470L1160 462Z" f="#161616" />
    <P d="M1160 390L1175 396V464L1160 458Z" f="#929598" />
    <P d="M1222 408L1258 376L1265 380V455L1232 474L1220 468Z" f="#8f9596" />
    <path d="M1162 390L1192 366M1226 404L1256 378" stroke="#f2f2f2" strokeWidth="8" />

    <path d="M710 525H875V397H710Z" stroke="#222" strokeWidth="3" strokeDasharray="4 5" />

    {/* dimensions */}
    <path d="M1210 303L1343 190M1338 195L1341 405M1341 438L1345 578M1348 580L1216 695M1225 670V743M1225 732L1095 840M1055 872L917 990M917 935V1010M230 812V880M230 867L522 918M603 932L917 991" stroke="#a6a69f" strokeWidth="3" />
    <path d="M1338 195l-5 18h10zM1345 578l-6 -18h10zM1225 732l-17 9l6 7zM917 990l-18 -8v9zM917 990l14 -14l5 7zM230 867l16 -2v8z" fill="#777" />
    <Dim x={1340} y={430}>220.00</Dim><Dim x={1080} y={863}>370.00</Dim><Dim x={560} y={936}>400.00</Dim>

    {/* title block */}
    <path d="M1508 840H1135V1050M1135 892H1508M1135 954H1508M1135 994H1508M1249 840V994" stroke="#c6c6c3" strokeWidth="3" />
    <Block x={1148} y={878} $s={29} $b $c="#2b2b2b">TITLE:</Block>
    <Block x={1141} y={934} $s={26} $c="#333">DRAWN</Block>
    <Block x={1380} y={861} $s={21} textAnchor="middle">3Axis Hobby CNC</Block>
    <Block x={1380} y={885} $s={21} textAnchor="middle">Router Machine</Block>
    <Block x={1260} y={934} $s={26} $c="#4a9ce2">MUSTAFA ALCHAAR</Block>
    <Block x={1110} y={983} $s={31}>{"Engraving Milling  Machine"}</Block>
    <Block x={1042} y={1031} $s={34}>Working Area 340x200x50mm</Block>
  </Canvas>
);

const range = (a: number, b: number) => Array.from({ length: b - a }, (_, i) => a + i);
const hMarks = range(-3, 16);
const vMarks = range(-9, 1);
const menus: [string, number][] = [["Edit", 17], ["View", 20], ["Insert", 23], ["Tools", 22], ["Window", 29]];
const line = (d: React.ReactNode, c = "#3f7796") => <Ico s={11} c={c} w={2}>{d}</Ico>;
const dot = (x: number, y: number) => <circle cx={x} cy={y} r="1.500" fill={blue} stroke="none" />;

export default function App() {
  return (
    <>
      <Global />
      <Page>
        <TitleBar>
          <Logo>
            <svg width="10" height="11" viewBox="0 0 20 22" fill="none" stroke="#d9262c" strokeWidth="2.400" aria-hidden="true">
              <path d="M3 2H9L5 7M1 19C8 20 12 11 4 10M2 19L5 12M19 9C12 7 11 12 15 14C19 17 15 20 9 19" />
            </svg>
            <span><b>SOLID</b>WORKS</span>
          </Logo>
          <Menu>
            <MenuItem $w={17} $boxed>File</MenuItem>
            {menus.map(([m, w]) => <MenuItem key={m} $w={w}>{m}</MenuItem>)}
            <Tool aria-label="Pin menu"><Pin /></Tool>
          </Menu>
          <QuickBar>
            <Tool $w={16} aria-label="Home"><Home /></Tool>
            <Tool $w={14} aria-label="New"><NewDoc /></Tool><Tool $w={8} aria-label="New options"><Caret /></Tool>
            <Tool $w={14} aria-label="Open"><OpenDoc /></Tool><Tool $w={8} aria-label="Open options"><Caret /></Tool>
            <Tool $w={14} aria-label="Save"><Save /></Tool><Tool $w={8} aria-label="Save options"><Caret /></Tool>
            <Tool $w={14} aria-label="Print"><Print /></Tool><Tool $w={8} aria-label="Print options"><Caret /></Tool>
            <Tool $w={14} aria-label="Undo"><Undo /></Tool><Tool $w={8} aria-label="Undo options"><Caret /></Tool>
            <Tool $w={14} aria-label="Redo"><Undo off /></Tool><Tool $w={8} aria-label="Redo options"><Caret off /></Tool>
            <Tool $w={15} $on aria-label="Select"><Cursor /></Tool><Tool $w={6} aria-label="Select options"><Caret /></Tool>
            <Tool $w={15} aria-label="Rebuild"><Traffic /></Tool>
            <Tool $w={15} aria-label="File properties"><ListIco /></Tool>
            <Tool $w={15} aria-label="Options"><Gear /></Tool><Tool $w={8} aria-label="More"><Caret /></Tool>
          </QuickBar>
          <DocTitle>MUSTAFA TEST - Sheet1 *</DocTitle>
          <SearchBox>
            <svg width="8" height="8" viewBox="0 0 16 16" aria-hidden="true"><rect width="16" height="16" fill="#2c2c2c" /><path d="M3 4L8 8L3 12M9 13H13" stroke="#fff" fill="none" strokeWidth="1.500" /></svg>
            <input defaultValue="sketch" aria-label="Search" />
            <Lens /><Caret />
          </SearchBox>
          <WindowTools>
            <Tool $w={18} aria-label="Account"><Ico s={10} w={1.600}><circle cx="8" cy="8" r="7" /><circle cx="8" cy="6.500" r="2.500" /><path d="M3.500 13C4 9.500 12 9.500 12.500 13" /></Ico></Tool>
            <Tool $w={18} aria-label="Help"><Ico s={10} w={1.600}><circle cx="8" cy="8" r="7" /><path d="M5.500 6C5.500 3 10.500 3 10.500 6C10.500 8 8 8 8 10M8 11.500V13" /></Ico></Tool>
            <Tool $w={18} aria-label="Minimize"><MinIco /></Tool>
            <Tool $w={18} aria-label="Restore"><RestIco /></Tool>
            <Tool $w={20} aria-label="Close"><CloseIco /></Tool>
          </WindowTools>
        </TitleBar>

        <Ribbon>
          <Group $w={35}>
            <BigTool $w={35}>
              <Ico s={12} c="#3d3d3d" w={2}><path d="M3 10C3 5 7 3 12 4" stroke={blue} /><path d="M10 1L13 4L9 6M1 8L3 11L6 8M9 10L13 14M13 10L9 14" /></Ico>
              <span>Smart<br />Dimension</span><Caret />
            </BigTool>
          </Group>
          <Group $w={75}>
            <SketchGrid>
              <Tool aria-label="Line">{line(<><path d="M2 14L14 2" />{dot(2, 14)}{dot(14, 2)}</>)}</Tool><Caret />
              <Tool aria-label="Circle">{line(<><circle cx="8" cy="8" r="6" />{dot(8, 8)}{dot(13, 3)}</>)}</Tool><Caret />
              <Tool aria-label="Spline">{line(<path d="M2 14C4 -4 6 2 8 8S12 18 14 2" />)}</Tool><Caret />
              <Tool aria-label="Point">{line(<rect x="6" y="6" width="4" height="4" fill={blue} />)}</Tool>
              <Tool aria-label="Rectangle">{line(<><rect x="2" y="4" width="12" height="9" />{dot(8, 8)}</>)}</Tool><Caret />
              <Tool aria-label="Arc">{line(<path d="M2 7C4 2 12 2 13 8C13 12 9 12 7 8M2 3V8H6" />)}</Tool><Caret />
              <Tool aria-label="Ellipse">{line(<><ellipse cx="8" cy="8" rx="7" ry="4.500" transform="rotate(-45 8 8)" />{dot(8, 8)}</>)}</Tool><Caret /><i />
              <Tool aria-label="Slot">{line(<><rect x="1" y="4" width="14" height="8" rx="4" /><path d="M5 8H11" /></>)}</Tool><Caret />
              <Tool aria-label="Polygon">{line(<><path d="M8 1.500L14 5V11L8 14.500L2 11V5Z" />{dot(8, 8)}</>)}</Tool><i />
              <Tool aria-label="Fillet">{line(<path d="M2 3C9 2 13 6 13 14M13 2V6" />, gray)}</Tool><Caret />
            </SketchGrid>
          </Group>
          <Group $w={161}>
            <BigTool $w={24}>
              <Ico s={12} c={blue} w={2.200}><path d="M2 2L14 14M14 2L8 8" /><rect x="2" y="9" width="5" height="5" fill="#444" /><rect x="9" y="3" width="4" height="4" /></Ico>
              <span>Trim<br />Entities</span><Caret />
            </BigTool>
            <BigTool $w={25} $off disabled>
              <Ico s={12} c="#d2d2d2"><path d="M2 5L8 2L14 5V11L8 14L2 11ZM2 5L8 8L14 5M8 8V14" /></Ico>
              <span>Convert<br />Entities</span><Caret off />
            </BigTool>
            <BigTool $w={24}>
              <Ico s={12} c={blue} w={2.400}><path d="M14 2H2V14H14" /><path d="M14 6H7V11H14" stroke="#444" strokeWidth="1.600" /></Ico>
              <span>Offset<br />Entities</span>
            </BigTool>
            <WideList>
              <WideTool><Ico s={10} c={blue}><path d="M1 2V14L6 8ZM15 2V14L10 8ZM8 0V16" /></Ico>Mirror Entities</WideTool>
              <WideTool><Ico s={10}><rect x="1" y="1" width="5" height="5" rx="2" /><rect x="9" y="1" width="5" height="5" rx="2" stroke={blue} /><rect x="1" y="9" width="5" height="5" rx="2" /><rect x="9" y="9" width="5" height="5" rx="2" stroke={blue} /></Ico>Linear Sketch Pattern<Caret /></WideTool>
              <WideTool $off disabled><Ico s={10} c="#cfcfcf"><path d="M1 14V8H7M8 3H14V9H8Z" /></Ico>Move Entities<Caret off /></WideTool>
            </WideList>
          </Group>
          <Group $w={44}>
            <BigTool $w={43}>
              <Ico s={12} c="#444" w={1.800}><path d="M6 2V13M1 13H9" /><circle cx="12" cy="12" r="2" fill="#777" /></Ico>
              <span>Display/Delete<br />Relations</span><Caret />
            </BigTool>
          </Group>
          <BigTool $w={21}>
            <Ico s={12} c={gray} w={1.800}><path d="M2 15V2H15" stroke={blue} /><circle cx="9" cy="9" r="5" />{dot(9, 9)}</Ico>
            <span>Quick<br />Snaps</span><Caret />
          </BigTool>
          <BigTool $w={22}>
            <Ico s={12} c="#555" w={2}><rect x="1" y="2.500" width="14" height="11" fill="#ddd" /><path d="M2 12L6 8L9 11L11 9L14 12" fill="#555" /></Ico>
            <span>Sketch<br />Picture</span>
          </BigTool>
          <RibbonEnd><Chevron d="M3 11L8 6L13 11" /></RibbonEnd>
        </Ribbon>

        <TabRow>
          <Tab $w={31}>Drawing</Tab><Tab $w={37}>Annotation</Tab><Tab $w={28} $on>Sketch</Tab><Tab $w={30}>Evaluate</Tab>
          <RulerH>{hMarks.map((n) => <Mark key={n}>{n % 4 === 0 && n >= 0 ? <b>{n * 25}</b> : <i />}</Mark>)}</RulerH>
        </TabRow>

        <Work>
          <RulerV>{vMarks.map((n) => <Mark $v key={n}>{n === -8 || n === -4 || n === 0 ? <b>{n * -25}</b> : <i />}</Mark>)}</RulerV>
          <Side>
            <Grip><i /></Grip>
            <SideTabs>
              <SideTab aria-label="Feature tree"><PartManager /></SideTab>
              <SideTab $on aria-label="Properties"><ListIco /></SideTab>
              <Expand aria-label="Expand"><Chevron d="M5 2L11 8L5 14" s={8} /></Expand>
            </SideTabs>
            <Filter><Ico s={10} c="#4a5a64"><path d="M1 2H15L10 9V14L6 12V9Z" fill="#7fb3cc" /></Ico><input aria-label="Filter tree" /></Filter>
            <TreeWrap>
              <Tree>
                <Row $root><svg width="4" height="3" viewBox="0 0 6 4"><path d="M0 0H6L3 4Z" fill="#444" /></svg><Ico s={10}>{treeIcons.light}</Ico>cnc_MACHINE&lt;28&gt;</Row>
                {rows.map(([k, t], i) => (
                  <Row key={i}>
                    <svg width="4" height="4" viewBox="0 0 4 4">{!closed.has(k) && <path d="M1 0L4 2L1 4Z" fill="#444" />}</svg>
                    <Ico s={10}>{treeIcons[k]}</Ico>{t}
                  </Row>
                ))}
              </Tree>
              <Thumb />
            </TreeWrap>
            <HThumb />
          </Side>
          <Viewport>
            <Drawing />
            <Splitter aria-label="Collapse panel" />
            <HeadsUp>
              <Tool $w={13} aria-label="Zoom to fit"><Ico s={10}><circle cx="10" cy="6" r="4" /><path d="M7 9L2 14" strokeWidth="2.500" /></Ico></Tool>
              <Tool $w={13} aria-label="Zoom area"><Ico s={10}><path d="M1 5V1H5M11 1H15V5M15 11V15H11M5 15H1V11M3 13L7 9M9 7L13 3M3 3L13 13" /></Ico></Tool>
              <Tool $w={13} aria-label="Previous view"><Ico s={10}><rect x="2" y="2" width="12" height="9" strokeDasharray="2 2" /><circle cx="9" cy="7" r="3.500" /><path d="M6 10L2 15" /></Ico></Tool>
              <Tool $w={13} aria-label="Section view"><Ico s={10}><path d="M1 12L10 2L15 5L7 14Z" /><path d="M2 11L8 13" stroke="#2d86b8" strokeWidth="3" /></Ico></Tool>
              <Tool $w={13} aria-label="Rotate"><Ico s={11} c="#3c87ae" w={2.600}><path d="M13 12C8 17 1 12 3 7C5 2 11 3 13 6M14 1V6H9" /></Ico></Tool>
              <Tool $w={13} aria-label="Drawing view"><Ico s={10}><rect x="1" y="2" width="12" height="9" fill="#bcd" /><path d="M8 8L13 6L15 13L9 15Z" fill={yellow} /></Ico></Tool>
              <Tool $w={13} aria-label="Display style"><Ico s={9} c="#c0c4ce"><path d="M2 4L10 2L14 4V12L8 15L2 13Z" fill="#eceef3" /><path d="M8 6V15" /></Ico></Tool>
              <Tool $w={7} aria-label="Display options"><Caret off /></Tool>
              <Tool $w={13} aria-label="Hide or show"><Ico s={10}><path d="M1 8Q8 1 15 8Q8 14 1 8Z" /><circle cx="8" cy="8" r="2.500" fill="#444" /></Ico></Tool>
              <Tool $w={7} aria-label="Visibility options"><Caret off /></Tool>
              <Tool $w={13} aria-label="Scene"><Ico s={10} c="#49738c"><circle cx="8" cy="8" r="6.500" fill="#3f93bd" /><ellipse cx="7" cy="5" rx="4" ry="2.500" fill="#cde6f2" stroke="none" /></Ico></Tool>
            </HeadsUp>
            <HeadsUp $side>
              <Tool $w={13} aria-label="Previous window"><Ico s={8} c="#8b8f9a" w={1.800}><rect x="1" y="1" width="13" height="13" /><path d="M5 2V13M11 5L8 8L11 11" /></Ico></Tool>
              <Tool $w={13} aria-label="Next window"><Ico s={8} c="#8b8f9a" w={1.800}><rect x="1" y="1" width="13" height="13" /><path d="M10 2V13M5 5L8 8L5 11" /></Ico></Tool>
              <Tool $w={13} aria-label="Minimize document"><MinIco c="#8b8f9a" /></Tool>
              <Tool $w={13} aria-label="Restore document"><RestIco c="#8b8f9a" /></Tool>
              <Tool $w={13} aria-label="Close document"><CloseIco c="#8b8f9a" /></Tool>
            </HeadsUp>
            <TaskPane>
              <PaneButton aria-label="Resources"><Home /></PaneButton>
              <PaneButton aria-label="Design library"><Ico s={10}><path d="M3 4L9 1L14 3V12L9 15L3 13Z" fill="#aaa" /><path d="M3 4L8 6L14 3M8 6V15" /></Ico></PaneButton>
              <PaneButton aria-label="File explorer"><Ico s={11}><path d="M1 13V3H6L7 5H13V7M1 13L4 7H15L13 13Z" fill="#eee" /></Ico></PaneButton>
              <PaneButton $on aria-label="View palette"><PartManager /></PaneButton>
              <PaneButton aria-label="Appearances"><Ico s={10} c="none"><circle cx="8" cy="8" r="7" fill="#2e7fc1" /><path d="M8 8V1A7 7 0 0 1 15 8Z" fill="#d33" /><path d="M8 8H15A7 7 0 0 1 8 15Z" fill="#e6b422" /><path d="M8 8V15A7 7 0 0 1 1 8Z" fill="#3a9d3a" /><circle cx="6" cy="5" r="2" fill="#fff" /></Ico></PaneButton>
              <PaneButton aria-label="Custom properties"><ListIco /></PaneButton>
            </TaskPane>
          </Viewport>
          <VScroll>
            <svg width="4" height="3" viewBox="0 0 4 3"><path d="M0 3H4L2 0Z" fill="#888" /></svg>
            <svg width="4" height="3" viewBox="0 0 4 3"><path d="M0 0H4L2 3Z" fill="#888" /></svg>
          </VScroll>
        </Work>

        <SheetRow>
          {["First", "Previous", "Next", "Last"].map((n, i) => <Nav key={n} aria-label={`${n} sheet`}><Chevron s={4} c="#999" d={i < 2 ? "M11 2L5 8L11 14" : "M5 2L11 8L5 14"} /></Nav>)}
          <SheetTab $w={35} $on><Ico s={7} c="#4a6a80"><path d="M2 1H10V14H2Z" fill="#fff" /><path d="M6 7H15V15H6Z" fill="#5b9bc0" /></Ico>Sheet1</SheetTab>
          <SheetTab $w={18} aria-label="Add sheet"><Ico s={7} c="#4b83a8"><path d="M1 5H11V13H1Z" fill="#fff" /><circle cx="12" cy="5" r="3" fill="#e9a13b" stroke="none" /></Ico></SheetTab>
          <HScroll>
            <svg width="3" height="4" viewBox="0 0 3 4"><path d="M3 0V4L0 2Z" fill="#777" /></svg>
            <svg width="3" height="4" viewBox="0 0 3 4"><path d="M0 0V4L3 2Z" fill="#777" /></svg>
          </HScroll>
        </SheetRow>
        <Status>
          <StatusCell $w={700}>SOLIDWORKS Premium 2022 SP1.0</StatusCell>
          <StatusCell $w={47}>Under Defined</StatusCell>
          <StatusCell $w={55}>Editing Sheet1</StatusCell>
          <StatusCell $w={25}>1 : 10</StatusCell>
          <StatusCell $w={13}><Chevron s={4} d="M2 12L8 5L14 12" /></StatusCell>
          <StatusCell $w={55}><Traffic s={8} /><Ico s={8} c="#555"><path d="M1 15H12V9H1Z" fill={yellow} /><path d="M4 9L10 2L14 5L9 10" fill="#555" /></Ico></StatusCell>
          <StatusCell $w={27}>MMGS</StatusCell>
          <StatusCell $w={16}><Chevron s={4} d="M2 12L8 5L14 12" /></StatusCell>
          <StatusCell $w={11}><Ico s={8}><ellipse cx="8" cy="8" rx="7" ry="5" fill="#bbb" /><path d="M4 8H12M8 5V11" /></Ico></StatusCell>
        </Status>

        <Taskbar>
          <Apps>
            <AppButton aria-label="Start"><svg width="12" height="12" viewBox="0 0 12 12"><path d="M0 0H5.700V5.700H0ZM6.300 0H12V5.700H6.300ZM0 6.300H5.700V12H0ZM6.300 6.300H12V12H6.300Z" fill="#48b6ee" /></svg></AppButton>
            <Pill><Lens c="#eee" />Search</Pill>
            <AppButton aria-label="Task view"><svg width="13" height="12" viewBox="0 0 13 12"><rect x="0" y="4" width="9" height="7" fill="#777" /><rect x="4" y="1" width="9" height="7" fill="#e3e3e3" /></svg></AppButton>
            <AppButton aria-label="Store"><svg width="13" height="13" viewBox="0 0 26 26"><path d="M8 6V3H18V6" fill="none" stroke="#4cb0e5" strokeWidth="2" /><rect x="1" y="5" width="24" height="19" rx="3" fill="#eef4f8" /><path d="M7 9H12V14H7Z" fill="#f25022" /><path d="M13 9H18V14H13Z" fill="#7fba00" /><path d="M7 15H12V20H7Z" fill="#00a4ef" /><path d="M13 15H18V20H13Z" fill="#ffb900" /></svg></AppButton>
            <AppButton aria-label="SolidWorks" $bg="#3d3e41" $bar="#5ab7e8"><svg width="13" height="13" viewBox="0 0 26 26"><rect x="1" y="1" width="24" height="17" rx="2" fill="#b8161c" /><path d="M10 5H4V10H10V15H3M13 4L15 15L18 7L21 15L24 4" fill="none" stroke="#fff" strokeWidth="2" /><path d="M8 20H13L8 25H13M15 25V20H19V25H15M21 20H24V25" fill="none" stroke="#eee" strokeWidth="1.500" /></svg></AppButton>
            <AppButton aria-label="File Explorer" $bar="#9a9a9a"><svg width="13" height="12" viewBox="0 0 26 24"><path d="M1 2H10L13 5H25V22H1Z" fill="#f5bd2f" /><path d="M6 12H20V22H6Z" fill="#2e83cc" /><path d="M1 9H25V14H1Z" fill="#fbd562" /></svg></AppButton>
            <AppButton aria-label="Opera" $bg="#4d2326" $bar="#d8a0a0"><svg width="13" height="13" viewBox="0 0 26 26"><ellipse cx="13" cy="13" rx="8" ry="10" fill="none" stroke="#f0202c" strokeWidth="5" /></svg></AppButton>
            <AppButton aria-label="Chrome" $bar="#9a9a9a"><svg width="15" height="14" viewBox="0 0 30 28"><circle cx="12" cy="15" r="11" fill="#36a852" /><path d="M12 15L2.500 9.500A11 11 0 0 1 21.500 9.500Z" fill="#e5412f" /><path d="M12 15L21.500 9.500A11 11 0 0 1 12 26Z" fill="#fbc116" /><circle cx="12" cy="15" r="5.500" fill="#fff" /><circle cx="12" cy="15" r="4" fill="#3f82ee" /><circle cx="23" cy="7" r="6" fill="#c5b5b5" /></svg></AppButton>
            <AppButton aria-label="Adobe" $bar="#9a9a9a"><svg width="11" height="11" viewBox="0 0 22 22"><rect width="22" height="22" rx="2" fill="#c3161c" /><path d="M5 17V5L11 11L17 5V17M8 14L11 5L14 14" fill="none" stroke="#fff" strokeWidth="2" /></svg></AppButton>
          </Apps>
          <Tray>
            <Chevron d="M2 11L8 5L14 11" c="#eee" s={6} />
            <Lang>ENG</Lang>
            <Ico s={9} c="#eee" w={1.600}><path d="M1 6Q8 0 15 6M3.500 9Q8 5 12.500 9M6 11.500Q8 10 10 11.500" /><circle cx="8" cy="13" r="1" fill="#eee" /></Ico>
            <Ico s={9} c="#eee"><path d="M1 6V10H4L8 13V3L4 6ZM10.500 5Q12 8 10.500 11M13 3Q16 8 13 13" /></Ico>
            <Ico s={9} c="#eee"><rect x="1" y="4" width="12" height="8" rx="2" /><rect x="3" y="6" width="5" height="4" fill="#eee" /><path d="M15 6.500V9.500" /></Ico>
            <Clock>12:41:45 PM<br />3/20/2024</Clock>
            <Bell aria-label="Notifications"><Ico s={9} c="none"><path d="M8 1C4 1 4 5 4 8L1 12H15L12 8C12 5 12 1 8 1ZM6 13H10L8 15Z" fill="#7fd3f3" /></Ico></Bell>
            <svg width="13" height="13" viewBox="0 0 26 26"><path d="M5 3H15L11 19H3C0 19 2 5 5 3Z" fill="#31b5e8" /><path d="M13 3H18C22 4 25 12 23 18H12Z" fill="#b25be0" /><path d="M3 14H12L10 21H5Z" fill="#63c86b" /><rect x="9" y="17" width="16" height="8" rx="2" fill="#f2b632" /><path d="M12 23V19H15V21H12M17 23V19H19M21 19H23V23H21Z" fill="none" stroke="#5c3c05" /></svg>
          </Tray>
        </Taskbar>
      </Page>
    </>
  );
}
